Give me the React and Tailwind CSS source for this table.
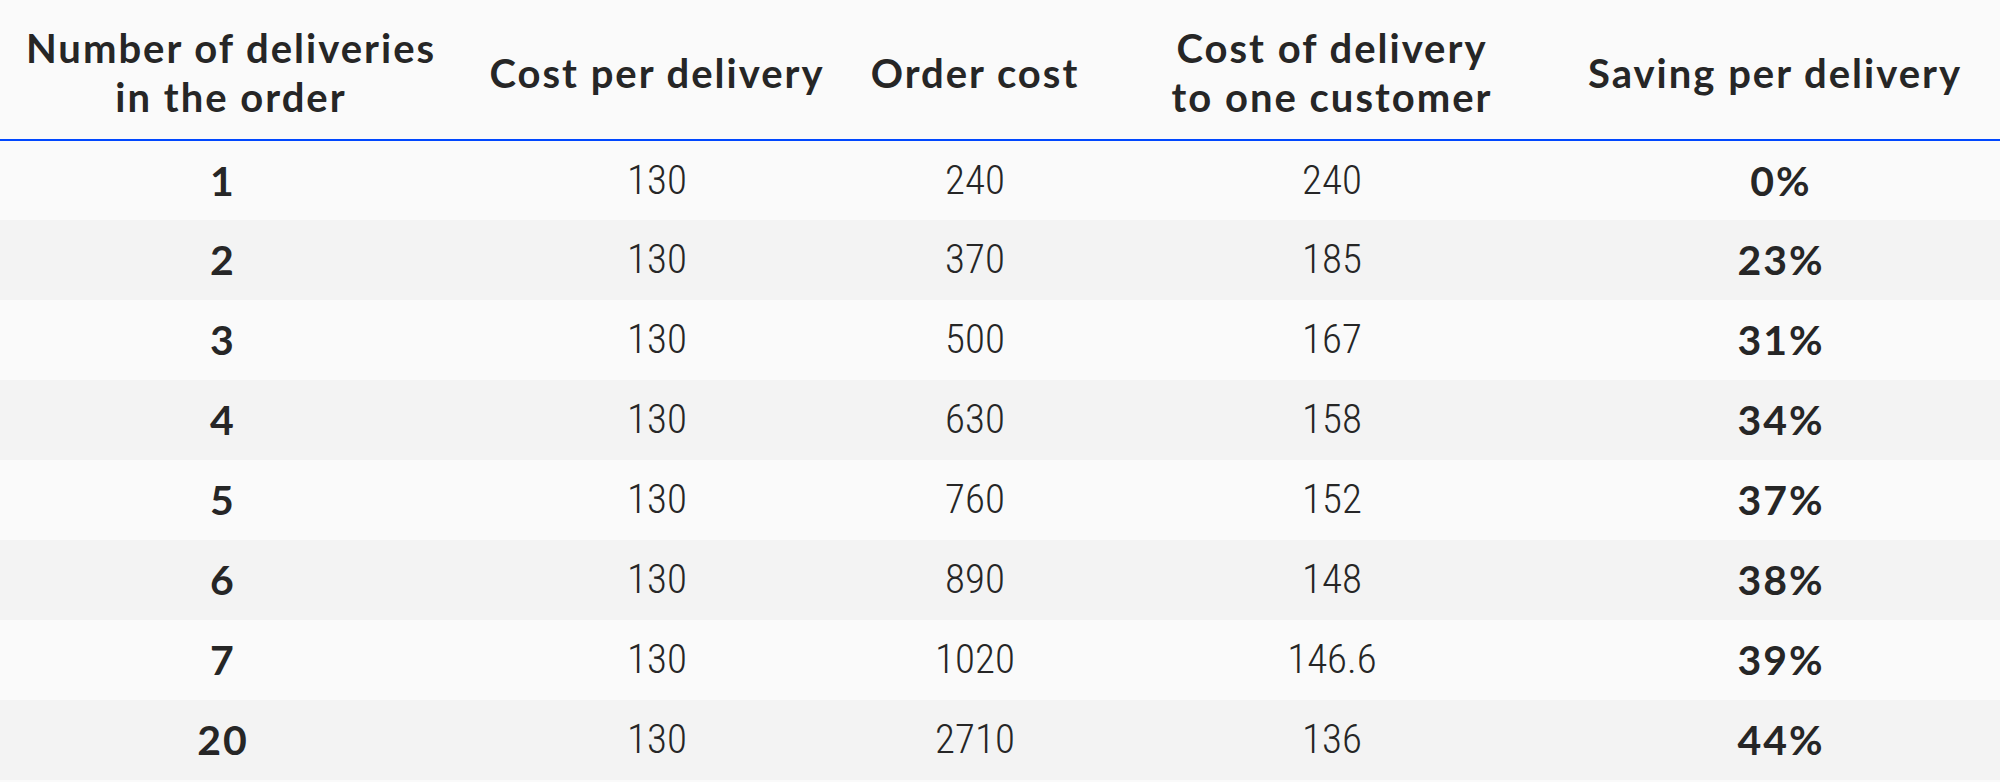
const rows = [
  { n: '1', cost: '130', order: '240', one: '240', saving: '0%' },
  { n: '2', cost: '130', order: '370', one: '185', saving: '23%' },
  { n: '3', cost: '130', order: '500', one: '167', saving: '31%' },
  { n: '4', cost: '130', order: '630', one: '158', saving: '34%' },
  { n: '5', cost: '130', order: '760', one: '152', saving: '37%' },
  { n: '6', cost: '130', order: '890', one: '148', saving: '38%' },
  { n: '7', cost: '130', order: '1020', one: '146.6', saving: '39%' },
  { n: '20', cost: '130', order: '2710', one: '136', saving: '44%' },
];

const head = "font-['Lato','Noto_Sans',sans-serif] font-bold text-[40px] leading-[49px] tracking-[2px]";
const light =
  "font-['Roboto_Condensed','Liberation_Sans_Narrow','DejaVu_Sans_Condensed','Roboto',sans-serif] font-light text-[41px] font-stretch-condensed";
const bold = "font-['Lato','Noto_Sans',sans-serif] font-bold text-[41px] tracking-[2px]";

export default function App() {
  return (
    <div className="w-[2000px] h-[782px] bg-[#fafafa] text-[#262626] overflow-hidden">
      <table className="w-full table-fixed border-collapse">
        <colgroup>
          <col className="w-[446px]" />
          <col className="w-[422px]" />
          <col className="w-[214px]" />
          <col className="w-[500px]" />
          <col />
        </colgroup>
        <thead>
          <tr className={`h-[140px] border-b-2 border-[#0047ff] ${head}`}>
            <th className="font-bold text-center align-middle pl-4 pt-[7px] whitespace-nowrap">
              Number of deliveries
              <br />
              in the order
            </th>
            <th className="font-bold text-center align-middle pt-[7px] whitespace-nowrap">Cost per delivery</th>
            <th className="font-bold text-center align-middle pt-[7px] whitespace-nowrap">Order cost</th>
            <th className="font-bold text-center align-middle pt-[7px] whitespace-nowrap">
              Cost of delivery
              <br />
              to one customer
            </th>
            <th className="font-bold text-center align-middle pr-8 pt-[7px] whitespace-nowrap">Saving per delivery</th>
          </tr>
        </thead>
        <tbody>
          {rows.map((r, i) => (
            <tr key={r.n} className={`h-[80px] ${i % 2 === 0 ? 'bg-[#fafafa]' : 'bg-[#f3f3f3]'}`}>
              <td className={`text-center align-middle ${bold}`}>{r.n}</td>
              <td className={`text-center align-middle ${light}`}>{r.cost}</td>
              <td className={`text-center align-middle ${light}`}>{r.order}</td>
              <td className={`text-center align-middle ${light}`}>{r.one}</td>
              <td className={`text-center align-middle pr-5 ${bold}`}>{r.saving}</td>
            </tr>
          ))}
        </tbody>
      </table>
    </div>
  );
}
